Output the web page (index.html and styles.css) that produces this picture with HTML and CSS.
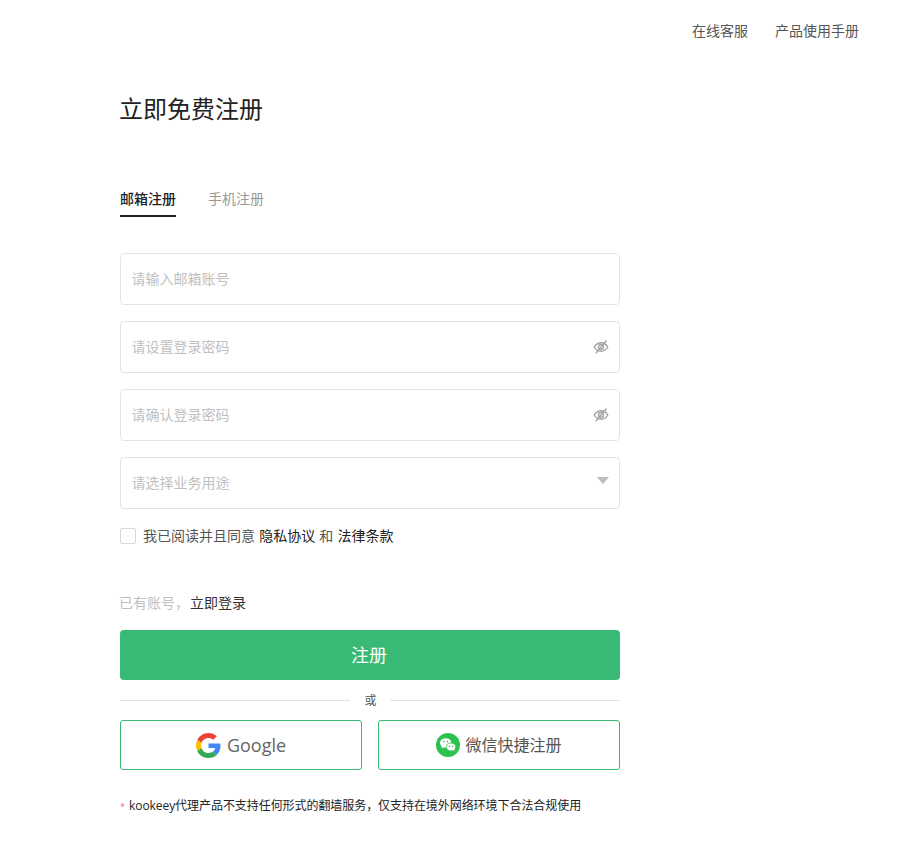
FILE: index.html
```html
<!DOCTYPE html>
<html lang="zh-CN">
<head>
<meta charset="utf-8">
<title>立即免费注册</title>
<link rel="stylesheet" href="styles.css">
</head>
<body>
<header class="topbar">
  <a class="top-link">在线客服</a>
  <a class="top-link">产品使用手册</a>
</header>
<main class="panel">
  <h1 class="title">立即免费注册</h1>
  <nav class="tabs">
    <a class="tab tab-active">邮箱注册</a>
    <a class="tab">手机注册</a>
  </nav>
  <form class="form">
    <div class="field"><input class="input" placeholder="请输入邮箱账号"></div>
    <div class="field"><input class="input" placeholder="请设置登录密码">
      <svg class="eye" viewBox="0 0 16 16" width="16" height="16" fill="none" stroke="#a3a3a3" stroke-width="1.4"><path d="M1.200 8c1.700-2.900 3.900-4.300 6.800-4.300S13.100 5.100 14.800 8c-1.700 2.900-3.900 4.300-6.800 4.300S2.900 10.900 1.200 8z"/><circle cx="8" cy="8" r="2.500"/><path d="M13.500 1.500 2.800 14.300"/></svg>
    </div>
    <div class="field"><input class="input" placeholder="请确认登录密码">
      <svg class="eye" viewBox="0 0 16 16" width="16" height="16" fill="none" stroke="#a3a3a3" stroke-width="1.4"><path d="M1.200 8c1.700-2.900 3.900-4.300 6.800-4.300S13.100 5.100 14.800 8c-1.700 2.900-3.900 4.300-6.800 4.300S2.900 10.900 1.200 8z"/><circle cx="8" cy="8" r="2.500"/><path d="M13.500 1.500 2.800 14.300"/></svg>
    </div>
    <div class="field select"><span class="placeholder">请选择业务用途</span><i class="caret"></i></div>
    <label class="agree"><span class="checkbox"></span><span class="agree-text">我已阅读并且同意 <b class="strong">隐私协议</b> 和 <b class="strong">法律条款</b></span></label>
    <p class="login"><span class="muted">已有账号，</span><a class="login-link">立即登录</a></p>
    <button type="button" class="submit">注册</button>
    <div class="divider"><span class="divider-text">或</span></div>
    <div class="socials">
      <button type="button" class="social">
        <svg class="social-icon" viewBox="0 0 48 48" width="25" height="25"><path fill="#EA4335" d="M24 9.500c3.500 0 6.700 1.300 9.200 3.500l6.800-6.800C35.800 2.400 30.200 0 24 0 14.600 0 6.500 5.400 2.600 13.200l7.900 6.200C12.400 13.700 17.700 9.500 24 9.500z"/><path fill="#4285F4" d="M47 24.500c0-1.600-.1-3.100-.4-4.500H24v9h12.900c-.6 3-2.200 5.500-4.800 7.200l7.700 6C44.300 37.900 47 31.800 47 24.500z"/><path fill="#FBBC05" d="M10.500 28.600c-.5-1.400-.8-3-.8-4.600s.3-3.200.8-4.600l-7.900-6.200C.9 16.500 0 20.100 0 24s.9 7.500 2.600 10.800l7.900-6.200z"/><path fill="#34A853" d="M24 48c6.500 0 11.900-2.100 15.800-5.800l-7.700-6c-2.100 1.400-4.900 2.300-8.100 2.300-6.300 0-11.600-4.200-13.500-9.900l-7.900 6.200C6.500 42.600 14.600 48 24 48z"/></svg>
        <span class="google-text">Google</span>
      </button>
      <button type="button" class="social">
        <svg class="social-icon" viewBox="0 0 24 24" width="24" height="24"><circle cx="12" cy="12" r="12" fill="#2dc14e"/><ellipse cx="9.700" cy="10" rx="5.700" ry="4.800" fill="#fff"/><path fill="#fff" d="M6 13l-.6 2.300 2.600-1.400z"/><ellipse cx="15" cy="14" rx="4.800" ry="4" fill="#fff" stroke="#2dc14e" stroke-width=".8"/><path fill="#fff" d="M17.500 17l1 1.800-.1-2.400z"/><circle cx="7.800" cy="8.600" r=".8" fill="#2dc14e"/><circle cx="11.500" cy="8.600" r=".8" fill="#2dc14e"/><circle cx="13.400" cy="13.200" r=".7" fill="#2dc14e"/><circle cx="16.600" cy="13.200" r=".7" fill="#2dc14e"/></svg>
        <span class="social-text">微信快捷注册</span>
      </button>
    </div>
    <p class="note"><span class="star">*</span><span class="note-text">kookeey代理产品不支持任何形式的翻墙服务，仅支持在境外网络环境下合法合规使用</span></p>
  </form>
</main>
</body>
</html>
```
FILE: styles.css
```css
* { box-sizing: border-box; }
html, body { margin: 0; padding: 0; background: #fff; }
body {
  height: 868px;
  overflow: hidden;
  font-family: "Open Sans", "Noto Sans CJK SC", sans-serif;
  font-size: 14px;
  color: #222;
}
.topbar {
  display: flex;
  justify-content: flex-end;
  gap: 27px;
  padding: 21px 48px 0 0;
  height: 40px;
  line-height: 20px;
}
.top-link { color: #555; }
.panel { width: 500px; margin-left: 120px; }
.title {
  margin: 51px 0 0 -1px;
  height: 36px;
  font-size: 24px;
  line-height: 36px;
  font-weight: 400;
  color: #222;
}
.tabs {
  display: flex;
  gap: 32px;
  margin-top: 60px;
  height: 30px;
}
.tab {
  height: 30px;
  line-height: 24px;
  color: #999;
}
.tab-active {
  color: #222;
  font-weight: 500;
  border-bottom: 2px solid #222;
}
.form { margin-top: 36px; }
.field {
  position: relative;
  height: 52px;
  margin-bottom: 16px;
}
.input {
  display: block;
  width: 100%;
  height: 52px;
  padding: 0 10.500px 2px;
  border: 1px solid #e4e4e4;
  border-radius: 4px;
  outline: 0;
  font: inherit;
  color: #222;
}
.input::placeholder { color: #bfbfbf; opacity: 1; }
.eye { position: absolute; right: 11px; top: 18px; }
.select {
  display: flex;
  align-items: center;
  justify-content: space-between;
  padding: 0 10px 2px 10.500px;
  border: 1px solid #e4e4e4;
  border-radius: 4px;
  margin-bottom: 0;
}
.placeholder { color: #bfbfbf; }
.caret {
  width: 0;
  height: 0;
  border-left: 6px solid transparent;
  border-right: 6px solid transparent;
  border-top: 7px solid #bdbdbd;
  margin: 0 0 3px;
}
.agree {
  display: flex;
  align-items: center;
  gap: 7px;
  margin-top: 19px;
  height: 16px;
}
.checkbox {
  width: 16px;
  height: 16px;
  border: 1px solid #d9d9d9;
  border-radius: 2px;
}
.agree-text { color: #555; line-height: 16px; word-spacing: 0.500px; }
.strong { font-weight: 400; color: #222; }
.login { margin: 49px 0 0 -1px; height: 20px; line-height: 20px; }
.muted { color: #bfbfbf; }
.login-link { color: #333; margin-left: 1px; }
.submit {
  display: block;
  width: 100%;
  height: 50px;
  margin-top: 17px;
  padding: 0 2px 2px 0;
  border: 0;
  border-radius: 4px;
  background: #39b976;
  color: #fff;
  font: inherit;
  font-size: 18px;
}
.divider {
  display: flex;
  align-items: center;
  gap: 12px;
  height: 20px;
  margin-top: 10px;
  color: #555;
  font-size: 12px;
}
.divider::before {
  content: "";
  width: 230px;
  height: 1px;
  background: #e4e4e4;
}
.divider::after {
  content: "";
  flex: 1;
  height: 1px;
  background: #e4e4e4;
}
.divider-text { width: 15px; margin-left: 1px; text-align: center; }
.socials { display: flex; gap: 16px; margin-top: 10px; }
.social {
  flex: 1;
  display: flex;
  align-items: center;
  justify-content: center;
  gap: 6px;
  height: 50px;
  padding: 0 0 2px;
  border: 1px solid #39b976;
  border-radius: 3px;
  background: #fff;
  color: #555;
  font: inherit;
  font-size: 16px;
}
.social-icon { margin-top: 2px; }
.google-text { font-size: 18px; color: #666; padding-top: 2px; }
.social-text { color: #555; margin-left: -1px; }
.note {
  display: flex;
  align-items: baseline;
  margin: 27px 0 0;
  font-size: 12px;
  line-height: 18px;
  color: #222;
}
.star { width: 9px; font-size: 9px; color: #e8698a; }
.note-text { letter-spacing: -0.060px; }
```
